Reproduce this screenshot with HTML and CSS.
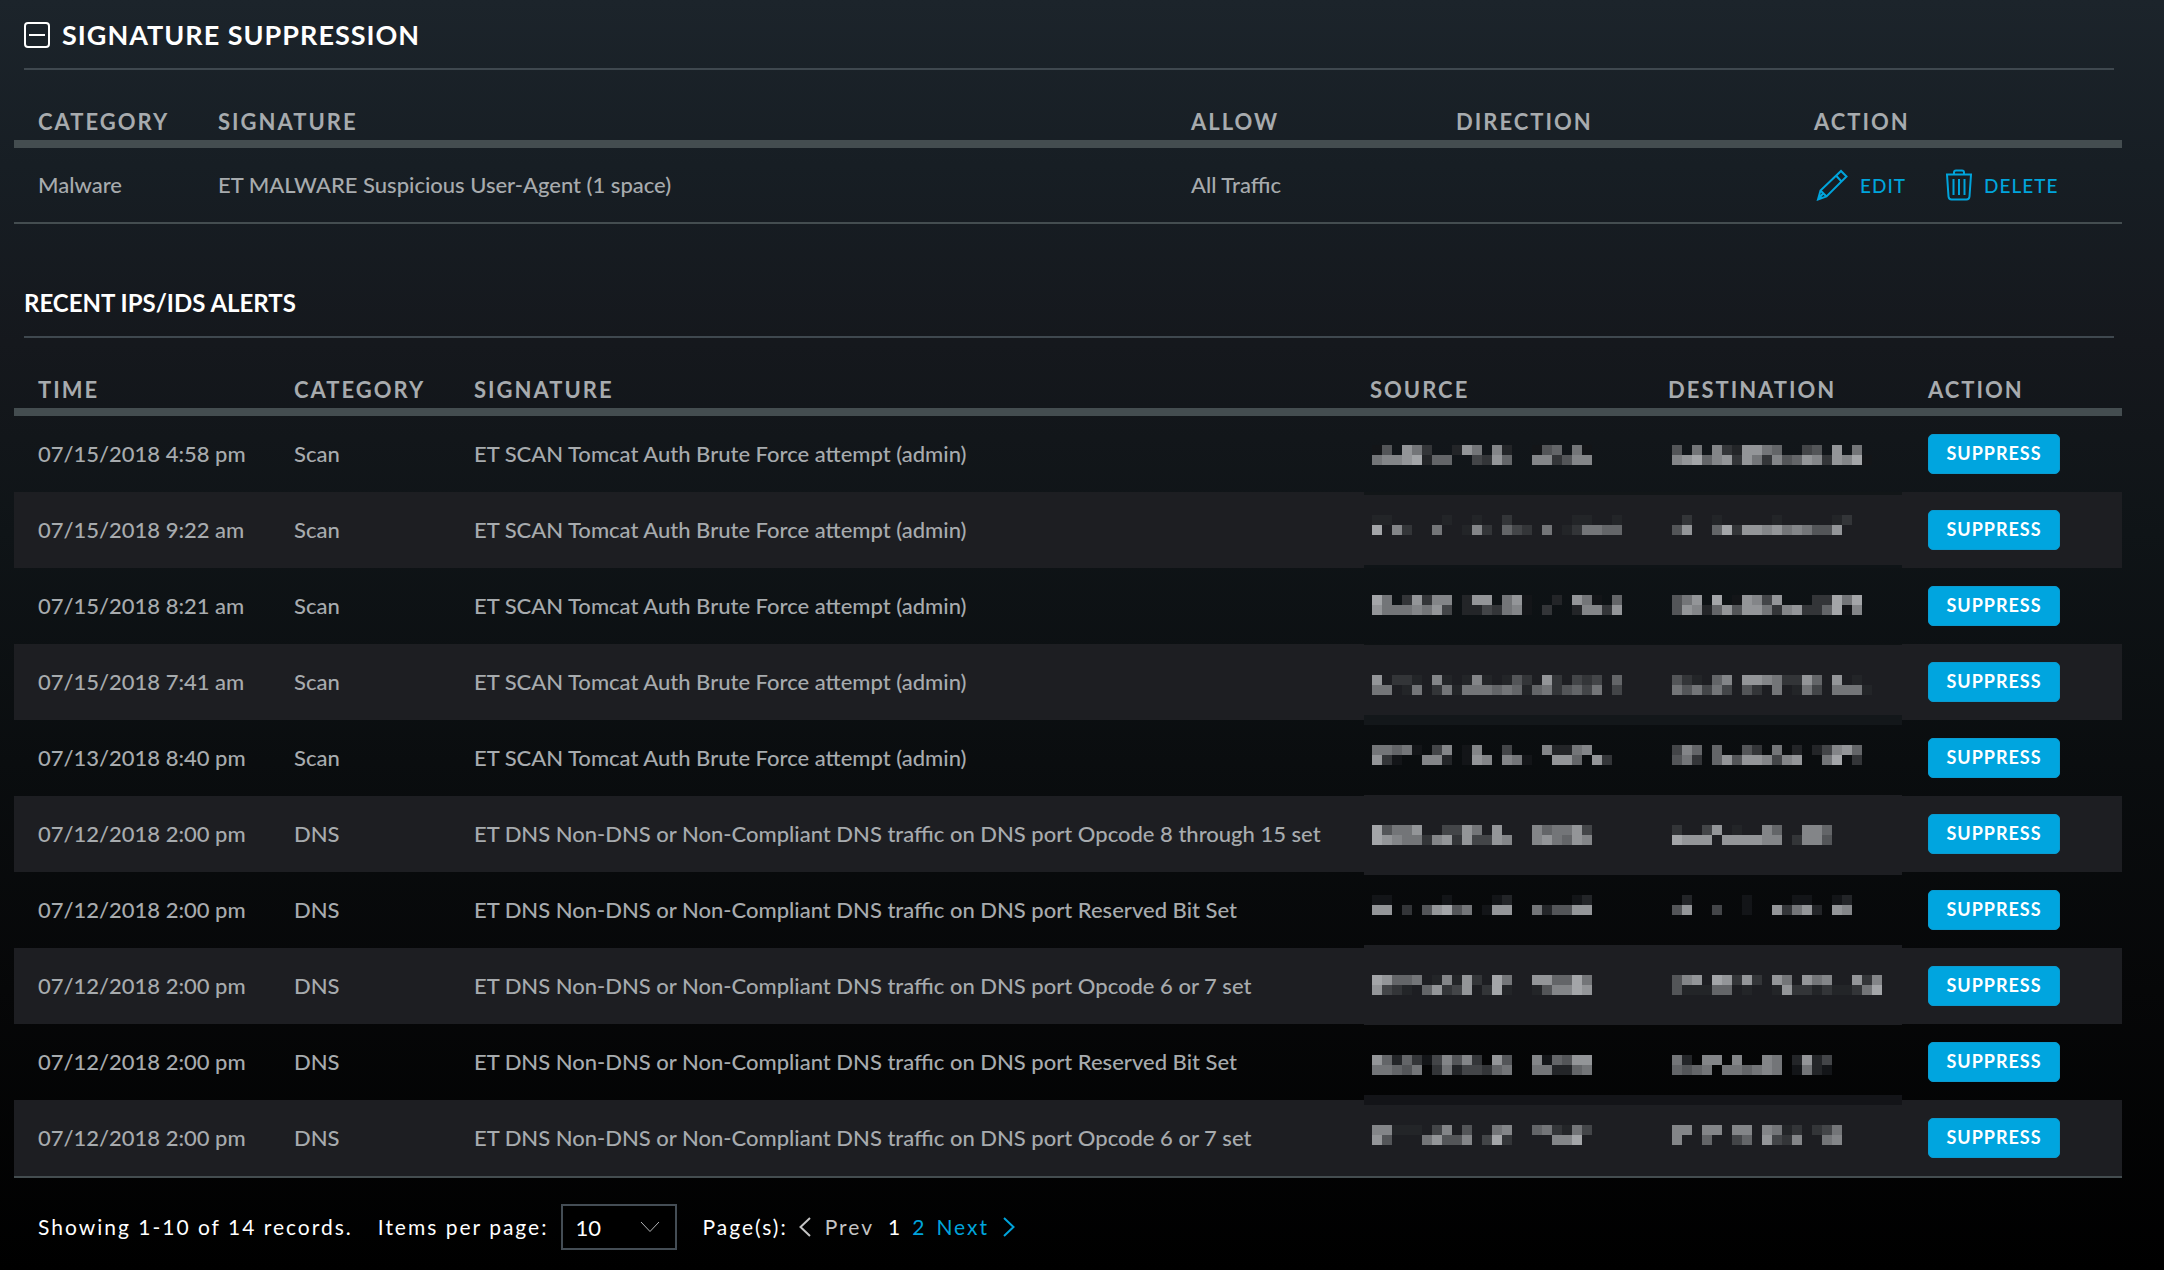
FILE: index.html
```html
<!DOCTYPE html>
<html lang="en">
<head>
    <meta charset="UTF-8">
    <title>Signature Suppression</title>
    <link rel="stylesheet" href="styles.css">
</head>
<body>
    <section class="section">
        <h2 class="section-title spaced">
            <button type="button" class="toggle" aria-label="Collapse">
                <svg width="26" height="26" viewBox="0 0 26 26"><rect x="1" y="1" width="24" height="24" rx="3"/><path d="M5 13h16"/></svg>
            </button>
            Signature Suppression
        </h2>
        <table class="grid suppression">
            <colgroup>
                <col class="c-cat"><col><col class="c-allow"><col class="c-dir"><col class="c-edit">
            </colgroup>
            <thead>
                <tr><th>Category</th><th>Signature</th><th>Allow</th><th>Direction</th><th>Action</th></tr>
            </thead>
            <tbody>
                <tr>
                    <td>Malware</td>
                    <td>ET MALWARE Suspicious User-Agent (1 space)</td>
                    <td>All Traffic</td>
                    <td></td>
                    <td>
                        <div class="actions">
                            <button type="button" class="link-button">
                                <svg width="32" height="32" viewBox="0 0 32 32"><path d="M2 30.500L4.500 21.500L25 2L30.500 7.500L10.500 27.500ZM4.500 21.500L10.500 27.500M20 6.500L25.500 12.500M2 30.500L7 24.500"/></svg>
                                Edit
                            </button>
                            <button type="button" class="link-button">
                                <svg width="26" height="32" viewBox="0 0 26 32"><path d="M1 5.500H25L23.500 27.500Q23.200 30.500 20.500 30.500H5.500Q2.800 30.500 2.500 27.500ZM8 5V3.500Q8 1.500 10 1.500H16Q18 1.500 18 3.500V5M7.500 10V26M13 10V26M18.500 10V26"/></svg>
                                Delete
                            </button>
                        </div>
                    </td>
                </tr>
            </tbody>
        </table>
    </section>

    <section class="section">
        <h2 class="section-title">Recent IPS/IDS Alerts</h2>
        <table class="grid alerts">
            <colgroup>
                <col class="c-time"><col class="c-cat"><col><col class="c-src"><col class="c-dst"><col class="c-act">
            </colgroup>
            <thead>
                <tr><th>Time</th><th>Category</th><th>Signature</th><th>Source</th><th>Destination</th><th>Action</th></tr>
            </thead>
            <tbody id="alertRows"></tbody>
        </table>
        <div class="pager">
            <span>Showing 1-10 of 14 records.</span>
            <label for="perPage">Items per page:</label>
            <span class="select-box">
                <select id="perPage">
                    <option>10</option>
                    <option>25</option>
                    <option>50</option>
                </select>
                <svg width="20" height="12" viewBox="0 0 20 12"><path d="M1 1L10 10.500L19 1"/></svg>
            </span>
            <span>Page(s):</span>
            <nav class="pages" aria-label="Pages">
                <span class="prev"><svg width="12" height="20" viewBox="0 0 12 20"><path d="M11 1L1.500 10L11 19"/></svg>Prev</span>
                <span>1</span>
                <a href="#2">2</a>
                <a href="#2" class="next">Next<svg width="12" height="20" viewBox="0 0 12 20"><path d="M1 1L10.500 10L1 19"/></svg></a>
            </nav>
        </div>
    </section>

    <script src="alerts.js"></script>
</body>
</html>
```

FILE: styles.css
```css
* {
    box-sizing: border-box;
}
body {
    margin: 0;
    padding: 14px 42px 0 14px;
    min-height: 100vh;
    font-family: Lato, sans-serif;
    font-size: 22px;
    line-height: 28px;
    color: #a7abae;
    background: linear-gradient(#1c242b 0%, #171e24 13%, #15181d 27%, #0f1417 42%, #0a0d0f 60%, #060708 78%, #000 100%);
}
.section {
    margin-bottom: 58px;
}
.section:last-of-type {
    margin-bottom: 0;
}
.section-title {
    display: flex;
    align-items: center;
    gap: 12px;
    height: 56px;
    margin: 0 8px 30px 10px;
    padding-bottom: 12px;
    border-bottom: 2px solid #3f484f;
    font-size: 24px;
    font-weight: bold;
    color: #fff;
    text-transform: uppercase;
}
.section-title.spaced {
    font-size: 27px;
    letter-spacing: 1px;
}
button {
    font-family: inherit;
    border: none;
    cursor: pointer;
    text-transform: uppercase;
}
svg {
    fill: none;
    stroke: currentColor;
    stroke-width: 2;
}
.toggle {
    padding: 0;
    background: none;
    color: #fff;
}
.toggle svg {
    display: block;
}
.grid {
    width: 100%;
    table-layout: fixed;
    border-collapse: separate;
    border-spacing: 0;
    border-bottom: 2px solid #444d50;
}
.grid th {
    height: 48px;
    padding: 4px 0 0 24px;
    border-bottom: 8px solid #444d50;
    font-size: 22px;
    font-weight: bold;
    letter-spacing: 2px;
    text-align: left;
    text-transform: uppercase;
}
.grid td {
    height: 76px;
    padding: 0 0 0 24px;
    font-weight: 500;
    white-space: nowrap;
}
.suppression td {
    height: 74px;
}
.alerts tbody tr:nth-child(even) {
    background-color: #1d1e22;
}
.c-cat {
    width: 180px;
}
.c-allow {
    width: 265px;
}
.c-dir {
    width: 358px;
}
.c-edit {
    width: 332px;
}
.c-time {
    width: 256px;
}
.c-src {
    width: 298px;
}
.c-dst {
    width: 260px;
}
.c-act {
    width: 218px;
}
.actions {
    display: flex;
    gap: 40px;
    padding-left: 2px;
}
.link-button {
    display: flex;
    align-items: center;
    gap: 12px;
    padding: 0;
    background: none;
    color: #00a4dc;
    font-size: 19px;
    font-weight: 500;
    letter-spacing: 1px;
}
.suppress {
    display: block;
    width: 132px;
    height: 40px;
    padding: 0 0 2px;
    border: 1px solid #0a9bd0;
    border-radius: 5px;
    background-color: #00a5df;
    color: #fff;
    font-size: 18px;
    font-weight: bold;
    letter-spacing: 1px;
}
.mosaic {
    display: block;
    width: 100%;
    height: 76px;
    overflow: visible;
    stroke: none;
    shape-rendering: crispEdges;
}
.pager {
    display: flex;
    align-items: center;
    gap: 25px;
    padding: 26px 24px 20px;
    font-size: 21px;
    letter-spacing: 2px;
    color: #fff;
}
.pager label {
    margin-right: -12px;
}
.select-box {
    position: relative;
}
.select-box select {
    display: block;
    appearance: none;
    width: 116px;
    height: 46px;
    padding: 0 12px;
    border: 2px solid #444d55;
    border-radius: 0;
    background: #000;
    color: #fff;
    font-family: inherit;
    font-size: 22px;
}
.select-box svg {
    position: absolute;
    right: 17px;
    top: 17px;
    color: #b4b6b8;
    stroke-width: 1;
    pointer-events: none;
}
.pages {
    display: flex;
    gap: 10px;
    margin-left: -14px;
}
.pages a {
    color: #00a4dc;
    text-decoration: none;
}
.prev, .next {
    display: flex;
    align-items: center;
    gap: 14px;
}
.prev {
    margin-right: 4px;
    color: #c4c4c4;
}
```

FILE: alerts.js
```js
const SCAN = 'ET SCAN Tomcat Auth Brute Force attempt (admin)';
const DNS = 'ET DNS Non-DNS or Non-Compliant DNS traffic on DNS port ';

// y: top of the masked address inside its row
// src / dst: one string per line of blocks, each hex digit is a brightness
// bands: [y, height, colour] strips behind the masked columns
const alerts = [
    { time: '07/15/2018 4:58 pm', cat: 'Scan', sig: SCAN, y: 29,
      src: ['15.973..297.82..156.71', '7889a266..4396..883588'],
      dst: ['5.7.8329976..45.9.7', '89a689397385698398a1'],
      bands: [[76, 3, '#121618']] },
    { time: '07/15/2018 9:22 am', cat: 'Scan', sig: SCAN, y: 23,
      src: ['22.....2..2..3......22..2', 'a.83..7..283.643.7.237766'],
      dst: ['.3..2.....2.....23', '59..6a39989787559'],
      bands: [[73, 3, '#0f1417']] },
    { time: '07/15/2018 8:21 am', cat: 'Scan', sig: SCAN, y: 27,
      src: ['a7.39388.299.791..2.971.6', '97778794.2243781.3..28839'],
      dst: ['579.a.19849...33a7a', '5982695997389336a18'],
      bands: [[76, 1, '#0e1214']] },
    { time: '07/15/2018 7:41 am', cat: 'Scan', sig: SCAN, y: 31,
      src: ['9.332.82.282.253.93.434.6', '77.27.37277767626735647.4'],
      dst: ['532.68.99873396.9.2', '757474.53.7.274.7772'],
      bands: [[71, 10, '#13171a']] },
    { time: '07/13/2018 8:40 pm', cat: 'Scan', sig: SCAN, y: 25,
      src: ['77671.48.18..4...82278', '931..882.198.871..996.93'],
      dst: ['486.6..53.7.2.24896', '573.695998489..7a.3'],
      bands: [[75, 1, '#1d1e22']] },
    { time: '07/12/2018 2:00 pm', cat: 'DNS', sig: DNS + 'Opcode 8 through 15 set', y: 29,
      src: ['a5779..4497.9...867794', 'a9877389394498..897698'],
      dst: ['3..49.2..86..886', 'a999.999988.3885'],
      bands: [[76, 3, '#1d1e22']] },
    { time: '07/12/2018 2:00 pm', cat: 'DNS', sig: DNS + 'Reserved Bit Set', y: 23,
      src: ['11.....1....12......12', '99.3.59a57.199..725599'],
      dst: ['.2.....1....11..12', '59..4..1..93792.98'],
      bands: [[73, 3, '#1d1e22']] },
    { time: '07/12/2018 2:00 pm', cat: 'DNS', sig: DNS + 'Opcode 6 or 7 set', y: 27,
      src: ['a9667.28293.a7..9966a7', '9432.69349.3a2..2588a9'],
      dst: ['589.a9393.97.978..938', '522266.2..2933232237a'],
      bands: [[76, 1, '#1d1e22']] },
    { time: '07/12/2018 2:00 pm', cat: 'DNS', sig: DNS + 'Reserved Bit Set', y: 31,
      src: ['96263148583.95..816599', '77657.37244367..772267'],
      dst: ['72.88.8..87.2924', '6567.776787.1721'],
      bands: [[71, 10, '#131418']] },
    { time: '07/12/2018 2:00 pm', cat: 'DNS', sig: DNS + 'Opcode 6 or 7 set', y: 25,
      src: ['88222.48.5..78..673274', '95...79558.4a3....88a'],
      dst: ['88.88.88.8723.347', '8..6..46.9438..78'],
      bands: [] }
];

const BLOCK = 10;

function mosaic(lines, left, top, bands) {
    let rects = bands.map(([y, h, fill]) =>
        `<rect x="-6" y="${y}" width="538" height="${h}" fill="${fill}"/>`).join('');
    lines.forEach((line, row) => {
        [...line].forEach((d, col) => {
            if (d === '.') return;
            rects += `<rect x="${left + col * BLOCK}" y="${top + row * BLOCK}" width="${BLOCK}" height="${BLOCK}" fill="#${d}3${d}5${d}8"/>`;
        });
    });
    return `<svg class="mosaic" aria-hidden="true">${rects}</svg>`;
}

document.getElementById('alertRows').innerHTML = alerts.map(a => `
    <tr>
        <td>${a.time}</td>
        <td>${a.cat}</td>
        <td>${a.sig}</td>
        <td>${mosaic(a.src, 2, a.y, a.bands)}</td>
        <td>${mosaic(a.dst, 4, a.y, [])}</td>
        <td><button type="button" class="suppress">Suppress</button></td>
    </tr>`).join('');
```
